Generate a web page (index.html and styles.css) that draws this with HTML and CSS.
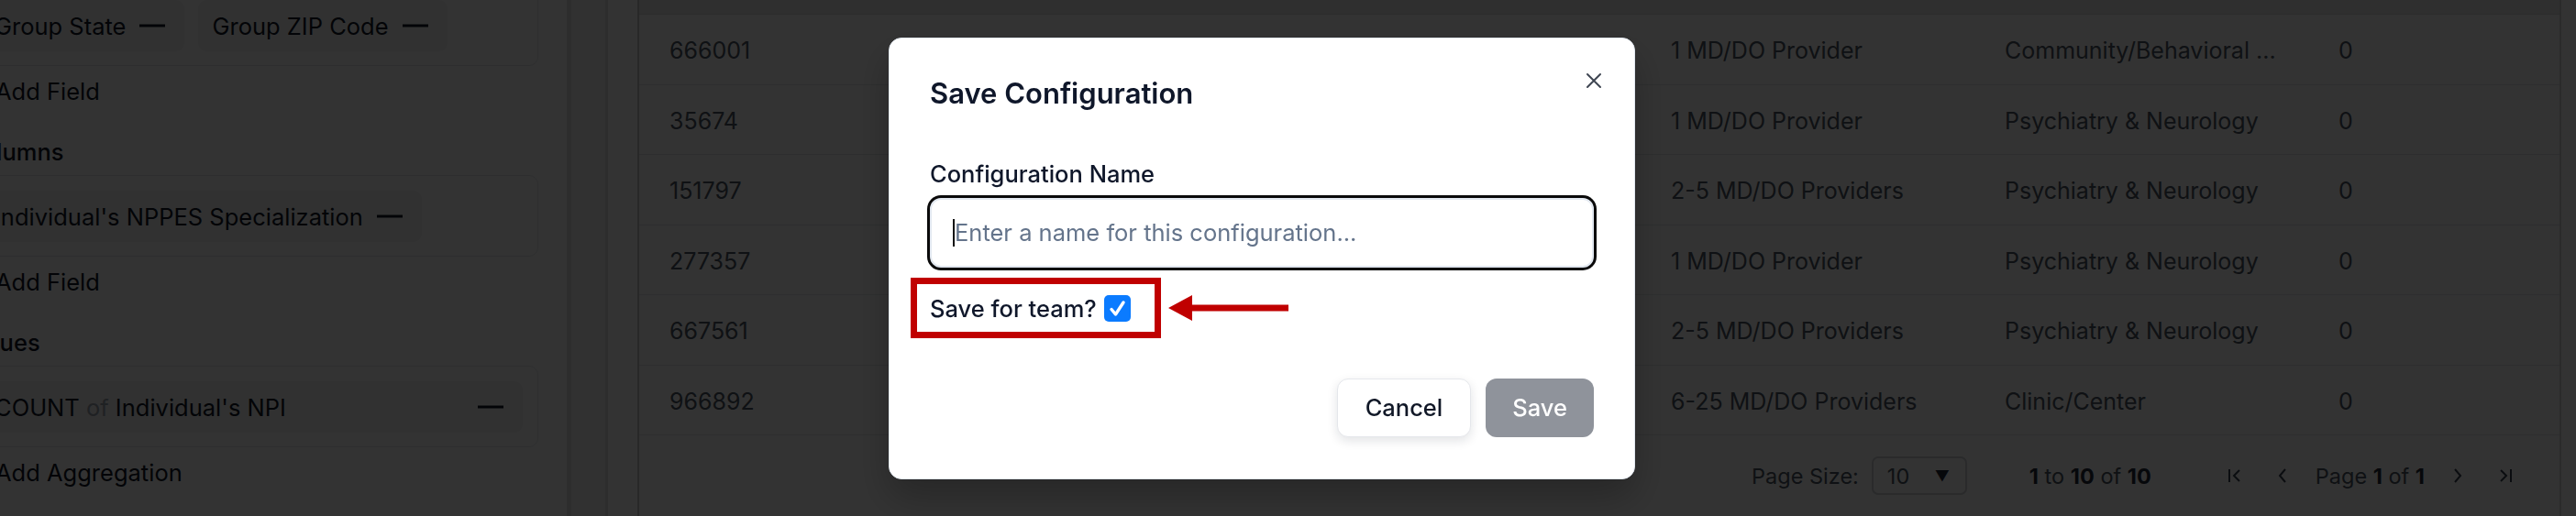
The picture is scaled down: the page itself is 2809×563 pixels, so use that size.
FILE: index.html
```html
<!DOCTYPE html>
<html lang="en">
<head>
<meta charset="utf-8">
<title>Save Configuration</title>
<link rel="stylesheet" href="styles.css">
</head>
<body>
<div class="app">
  <aside class="sidebar">
    <div class="sidebar-inner">
      <div class="field-box">
        <span class="chip"><span>Group State</span><svg class="minus" viewBox="0 0 28 4"><rect width="28" height="3" y="0.5" fill="currentColor"/></svg></span>
        <span class="chip"><span>Group ZIP Code</span><svg class="minus" viewBox="0 0 28 4"><rect width="28" height="3" y="0.5" fill="currentColor"/></svg></span>
      </div>
      <button class="add-btn"><svg class="plus" viewBox="0 0 20 20"><path d="M10 3v14M3 10h14" stroke="currentColor" stroke-width="2.5"/></svg>Add Field</button>
      <div class="section-label">Columns</div>
      <div class="field-box">
        <span class="chip"><span>Individual's NPPES Specialization</span><svg class="minus" viewBox="0 0 28 4"><rect width="28" height="3" y="0.5" fill="currentColor"/></svg></span>
      </div>
      <button class="add-btn"><svg class="plus" viewBox="0 0 20 20"><path d="M10 3v14M3 10h14" stroke="currentColor" stroke-width="2.5"/></svg>Add Field</button>
      <div class="section-label">Values</div>
      <div class="field-box">
        <span class="chip chip-full"><span>COUNT <span class="muted">of</span> Individual's NPI</span><svg class="minus" viewBox="0 0 28 4"><rect width="28" height="3" y="0.5" fill="currentColor"/></svg></span>
      </div>
      <button class="add-btn"><svg class="plus" viewBox="0 0 20 20"><path d="M10 3v14M3 10h14" stroke="currentColor" stroke-width="2.5"/></svg>Add Aggregation</button>
    </div>
  </aside>
  <div class="gutter"></div>
  <main class="main">
    <div class="grid">
      <div class="grid-header"></div>
      <div class="grid-row"><span class="cell">666001</span><span class="cell">Rivera Health</span><span class="cell">CA</span><span class="cell">1 MD/DO Provider</span><span class="cell">Community/Behavioral ...</span><span class="cell">0</span></div>
      <div class="grid-row"><span class="cell">35674</span><span class="cell">Lakeside Clinic</span><span class="cell">NY</span><span class="cell">1 MD/DO Provider</span><span class="cell">Psychiatry &amp; Neurology</span><span class="cell">0</span></div>
      <div class="grid-row"><span class="cell">151797</span><span class="cell">Summit Care</span><span class="cell">TX</span><span class="cell">2-5 MD/DO Providers</span><span class="cell">Psychiatry &amp; Neurology</span><span class="cell">0</span></div>
      <div class="grid-row"><span class="cell">277357</span><span class="cell">Harbor Mind</span><span class="cell">FL</span><span class="cell">1 MD/DO Provider</span><span class="cell">Psychiatry &amp; Neurology</span><span class="cell">0</span></div>
      <div class="grid-row"><span class="cell">667561</span><span class="cell">Northside Group</span><span class="cell">WA</span><span class="cell">2-5 MD/DO Providers</span><span class="cell">Psychiatry &amp; Neurology</span><span class="cell">0</span></div>
      <div class="grid-row"><span class="cell">966892</span><span class="cell">Valley Partners</span><span class="cell">OR</span><span class="cell">6-25 MD/DO Providers</span><span class="cell">Clinic/Center</span><span class="cell">0</span></div>
      <div class="grid-footer">
        <span class="pg-label">Page Size:</span>
        <span class="pg-select"><span>10</span><span class="caret-down">▼</span></span>
        <span class="pg-summary"><b>1</b> to <b>10</b> of <b>10</b></span>
        <span class="pager">
          <svg class="pg-icon" viewBox="0 0 24 24"><path d="M6 5v14M17 6l-6 6 6 6" fill="none" stroke="currentColor" stroke-width="2"/></svg>
          <svg class="pg-icon" viewBox="0 0 24 24"><path d="M15 5l-6 7 6 7" fill="none" stroke="currentColor" stroke-width="2"/></svg>
          <span class="pg-text">Page <b>1</b> of <b>1</b></span>
          <svg class="pg-icon" viewBox="0 0 24 24"><path d="M9 5l6 7-6 7" fill="none" stroke="currentColor" stroke-width="2"/></svg>
          <svg class="pg-icon" viewBox="0 0 24 24"><path d="M7 6l6 6-6 6M18 5v14" fill="none" stroke="currentColor" stroke-width="2"/></svg>
        </span>
      </div>
    </div>
  </main>
</div>

<div class="overlay">
  <div class="modal" role="dialog" aria-labelledby="modal-title">
    <button class="close" aria-label="Close"><svg viewBox="0 0 24 24"><path d="M5 5l14 14M19 5L5 19" stroke="currentColor" stroke-width="2" stroke-linecap="round"/></svg></button>
    <h2 class="modal-title" id="modal-title">Save Configuration</h2>
    <label class="field-label" for="cfg-name">Configuration Name</label>
    <div class="input-wrap">
      <input id="cfg-name" class="text-input" type="text" placeholder="Enter a name for this configuration...">
      <span class="text-caret"></span>
    </div>
    <div class="team-row">
      <label class="team-box">Save for team?
        <span class="checkbox"><svg viewBox="0 0 29 29"><path d="M8 15.5l4.5 5.5L21 8" fill="none" stroke="#fff" stroke-width="3.4" stroke-linecap="round" stroke-linejoin="round"/></svg></span>
      </label>
      <svg class="arrow" viewBox="0 0 131 28"><path d="M0 14L26 0V10.5H131V17.5H26V28Z" fill="#c00000"/></svg>
    </div>
    <div class="modal-actions">
      <button class="btn btn-cancel">Cancel</button>
      <button class="btn btn-save" disabled>Save</button>
    </div>
  </div>
</div>
</body>
</html>
```

FILE: styles.css
```css
* { box-sizing: border-box; margin: 0; padding: 0; }

html, body {
  width: 2809px;
  height: 563px;
  overflow: hidden;
}

body {
  font-family: Inter, "Liberation Sans", sans-serif;
  font-size: 25.5px;
  color: #111827;
  background: #fff;
}

button {
  font: inherit;
  color: inherit;
  background: none;
  border: none;
}

.app {
  display: flex;
  height: 563px;
}

/* ---------- sidebar ---------- */
.sidebar {
  width: 618px;
  flex: none;
  overflow: hidden;
  background: #fff;
}

.sidebar-inner {
  margin: -17px 31px 0 -38px;
}

.field-box {
  display: flex;
  flex-wrap: wrap;
  gap: 15px;
  padding: 16px 16px 15px;
  border: 1px solid #e5e7eb;
  border-radius: 10px;
}

.chip {
  display: inline-flex;
  align-items: center;
  gap: 15px;
  height: 56px;
  padding: 0 21px 0 15px;
  background: #f3f4f6;
  border-radius: 9px;
  white-space: nowrap;
}

.chip-full {
  flex: 1;
  justify-content: space-between;
}

.muted { color: #9ca3af; }

.minus {
  width: 28px;
  height: 4px;
  flex: none;
}

.add-btn {
  display: flex;
  align-items: center;
  gap: 12px;
  height: 30px;
  margin: 13px 0 36px;
  line-height: 30px;
  white-space: nowrap;
}

.plus { width: 21px; height: 21px; }

.section-label {
  height: 30px;
  line-height: 30px;
  margin-bottom: 10px;
  font-weight: 500;
}

.gutter {
  width: 45px;
  flex: none;
  background: #f6f6f6;
  border-left: 5px solid #dedede;
  border-right: 3px solid #e0e0e0;
}

/* ---------- grid ---------- */
.main {
  flex: 1;
  display: flex;
  padding: 0 16px 0 32px;
  min-width: 0;
}

.grid {
  flex: 1;
  min-width: 0;
  overflow: hidden;
  border-left: 2px solid #c9c9c9;
  border-right: 2px solid #d6d6d6;
  color: #4b5563;
  font-size: 25px;
}

.grid-header {
  height: 16px;
  background: #ececec;
  border-bottom: 1px solid #dcdcdc;
}

.grid-row {
  display: grid;
  grid-template-columns: repeat(6, 364px);
  align-items: center;
  height: 76.5px;
  padding: 3px 0 0 14px;
  border-bottom: 1px solid #e5e7eb;
  white-space: nowrap;
}

.cell {
  padding-left: 19px;
  overflow: hidden;
}

.grid-footer {
  display: flex;
  align-items: center;
  justify-content: flex-end;
  height: 86px;
  padding: 2px 47px 0 0;
  font-size: 23.5px;
  white-space: nowrap;
}

.grid-footer b { font-weight: 700; color: #1f2937; }

.pg-select {
  display: flex;
  align-items: center;
  justify-content: space-between;
  width: 104px;
  height: 42px;
  margin-left: 14px;
  padding: 0 17px 0 15px;
  border: 2px solid #cfd2d6;
  border-radius: 7px;
}

.caret-down { font-size: 16px; color: #1f2937; }

.pg-summary { margin-left: 68px; }

.pager {
  display: flex;
  align-items: center;
  margin-left: 79px;
}

.pg-icon {
  width: 24px;
  height: 24px;
  color: #374151;
}

.pg-icon + .pg-icon { margin-left: 28px; }
.pg-text { margin: 0 24px; }

/* ---------- modal ---------- */
.overlay {
  position: fixed;
  inset: 0;
  display: flex;
  align-items: center;
  justify-content: center;
  padding-right: 57px;
  background: rgba(0, 0, 0, 0.8);
}

.modal {
  position: relative;
  width: 814px;
  padding: 43px 44px 45px;
  background: #fff;
  border: 1px solid #e2e8f0;
  border-radius: 14px;
  box-shadow: 0 20px 40px rgba(0, 0, 0, 0.25);
  color: #0f172a;
}

.close {
  position: absolute;
  top: 34px;
  right: 32px;
  width: 24px;
  height: 24px;
  color: #3f4652;
}

.close svg { width: 24px; height: 24px; display: block; }

.modal-title {
  font-size: 31px;
  font-weight: 600;
  line-height: 34px;
  margin-bottom: 56px;
}

.field-label {
  display: block;
  height: 30px;
  line-height: 30px;
  margin-bottom: 11px;
  font-weight: 500;
}

.input-wrap {
  position: relative;
}

.text-input {
  display: block;
  width: 100%;
  height: 76px;
  padding: 0 20px 0 25px;
  font: inherit;
  color: #0f172a;
  border: 2px solid #e2e8f0;
  border-radius: 12px;
  box-shadow: 0 0 0 3px #0a0a0a;
  outline: none;
}

.text-input::placeholder { color: #64748b; }

.text-caret {
  position: absolute;
  left: 25px;
  top: 23px;
  width: 2px;
  height: 30px;
  background: #111;
}

.team-row {
  display: flex;
  align-items: center;
  margin: 11px 0 0 -21px;
}

.team-box {
  display: flex;
  align-items: center;
  gap: 8px;
  height: 66px;
  padding: 1px 26px 0 14px;
  border: 7px solid #c00000;
  font-weight: 500;
}

.checkbox {
  display: flex;
  width: 29px;
  height: 29px;
  background: #0b7bff;
  border-radius: 5px;
}

.checkbox svg { width: 29px; height: 29px; }

.arrow {
  width: 131px;
  height: 28px;
  margin-left: 8px;
}

.modal-actions {
  display: flex;
  justify-content: flex-end;
  gap: 16px;
  margin-top: 44px;
}

.btn {
  height: 64px;
  border-radius: 12px;
  font-weight: 500;
}

.btn-cancel {
  padding: 0 30px;
  background: #fff;
  border: 1px solid #e5e7eb;
  box-shadow: 0 4px 12px rgba(15, 23, 42, 0.12);
  color: #111827;
}

.btn-save {
  padding: 0 29px;
  background: #8f939b;
  color: #fff;
}
```
